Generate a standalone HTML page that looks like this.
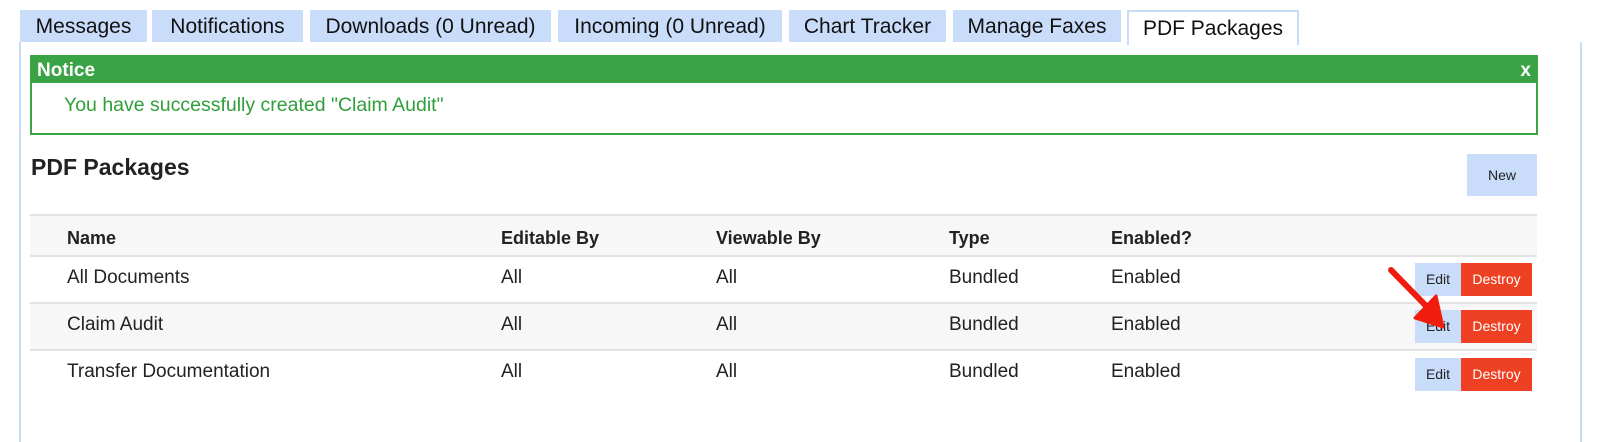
<!DOCTYPE html>
<html><head><style>
body{margin:0;width:1600px;height:430px;background:#fff;font-family:"Liberation Sans",Arial,sans-serif;position:relative;overflow:hidden;color:#222}
.tab{position:absolute;top:10px;height:32px;background:#c9ddfb;font-size:21px;line-height:33px;text-align:center;color:#111;white-space:nowrap}
.panel{position:absolute;left:19px;top:42px;width:1559px;height:400px;border-left:2px solid #c9ddfb;border-right:2px solid #c9ddfb}
.notice{position:absolute;left:30px;top:55px;width:1504px;height:76px;border:2px solid #3aa346}
.nh{background:#3aa346;height:26px;color:#fff;font-weight:bold;font-size:19px;line-height:27px;padding-left:5px;position:relative}
.nb{color:#2f9e3a;font-size:19.5px;padding:11px 0 0 32px}
.row{position:absolute;left:30px;width:1507px;border-top:2px solid #e3e3e3;font-size:19px}
.hd{font-size:18px}
.c{position:absolute;top:0;white-space:nowrap}
.btn{position:absolute;font-size:14px;line-height:33px;text-align:center;height:33px}
</style></head><body>
<div class="panel"></div>
<div class="tab" style="left:20px;width:127px">Messages</div>
<div class="tab" style="left:152px;width:151px">Notifications</div>
<div class="tab" style="left:310px;width:241px">Downloads (0 Unread)</div>
<div class="tab" style="left:558px;width:224px">Incoming (0 Unread)</div>
<div class="tab" style="left:789px;width:157px">Chart Tracker</div>
<div class="tab" style="left:953px;width:168px">Manage Faxes</div>
<div class="tab" style="left:1127px;width:168px;background:#fff;border:2px solid #c9ddfb;border-bottom:none;top:10px;height:33px">PDF Packages</div>
<div class="notice"><div class="nh">Notice<span style="position:absolute;right:5px;top:0">x</span></div><div class="nb">You have successfully created "Claim Audit"</div></div>
<div style="position:absolute;left:31px;top:154px;font-size:23px;font-weight:bold">PDF Packages</div>
<div class="btn" style="left:1467px;top:154px;width:70px;height:42px;line-height:42px;background:#c9ddfb">New</div>
<div class="row hd" style="top:214px;height:41px;background:#f7f7f7;font-weight:bold">
<span class="c" style="left:37px;top:12px">Name</span><span class="c" style="left:471px;top:12px">Editable By</span><span class="c" style="left:686px;top:12px">Viewable By</span><span class="c" style="left:919px;top:12px">Type</span><span class="c" style="left:1081px;top:12px">Enabled?</span></div>
<div class="row" style="top:255px;height:46px;background:#fff">
<span class="c" style="left:37px;top:10px">All Documents</span><span class="c" style="left:471px;top:10px">All</span><span class="c" style="left:686px;top:10px">All</span><span class="c" style="left:919px;top:10px">Bundled</span><span class="c" style="left:1081px;top:10px">Enabled</span></div>
<div class="row" style="top:302px;height:46px;background:#f7f7f7">
<span class="c" style="left:37px;top:10px">Claim Audit</span><span class="c" style="left:471px;top:10px">All</span><span class="c" style="left:686px;top:10px">All</span><span class="c" style="left:919px;top:10px">Bundled</span><span class="c" style="left:1081px;top:10px">Enabled</span></div>
<div class="row" style="top:349px;height:46px;background:#fff">
<span class="c" style="left:37px;top:10px">Transfer Documentation</span><span class="c" style="left:471px;top:10px">All</span><span class="c" style="left:686px;top:10px">All</span><span class="c" style="left:919px;top:10px">Bundled</span><span class="c" style="left:1081px;top:10px">Enabled</span></div>
<div class="btn" style="left:1415px;top:263px;width:46px;background:#c9ddfb">Edit</div><div class="btn" style="left:1461px;top:263px;width:71px;background:#ee4123;color:#fff">Destroy</div>
<div class="btn" style="left:1415px;top:310px;width:46px;background:#c9ddfb">Edit</div><div class="btn" style="left:1461px;top:310px;width:71px;background:#ee4123;color:#fff">Destroy</div>
<div class="btn" style="left:1415px;top:358px;width:46px;background:#c9ddfb">Edit</div><div class="btn" style="left:1461px;top:358px;width:71px;background:#ee4123;color:#fff">Destroy</div>
<svg style="position:absolute;left:0;top:0" width="1600" height="430">
<line x1="1391" y1="270" x2="1434" y2="314" stroke="#f01d0f" stroke-width="6" stroke-linecap="round"/>
<path d="M1436 296 L1443 327 L1415 318 Z" fill="#f01d0f" stroke="#f01d0f" stroke-width="3" stroke-linejoin="round"/>
</svg>
</body></html>
